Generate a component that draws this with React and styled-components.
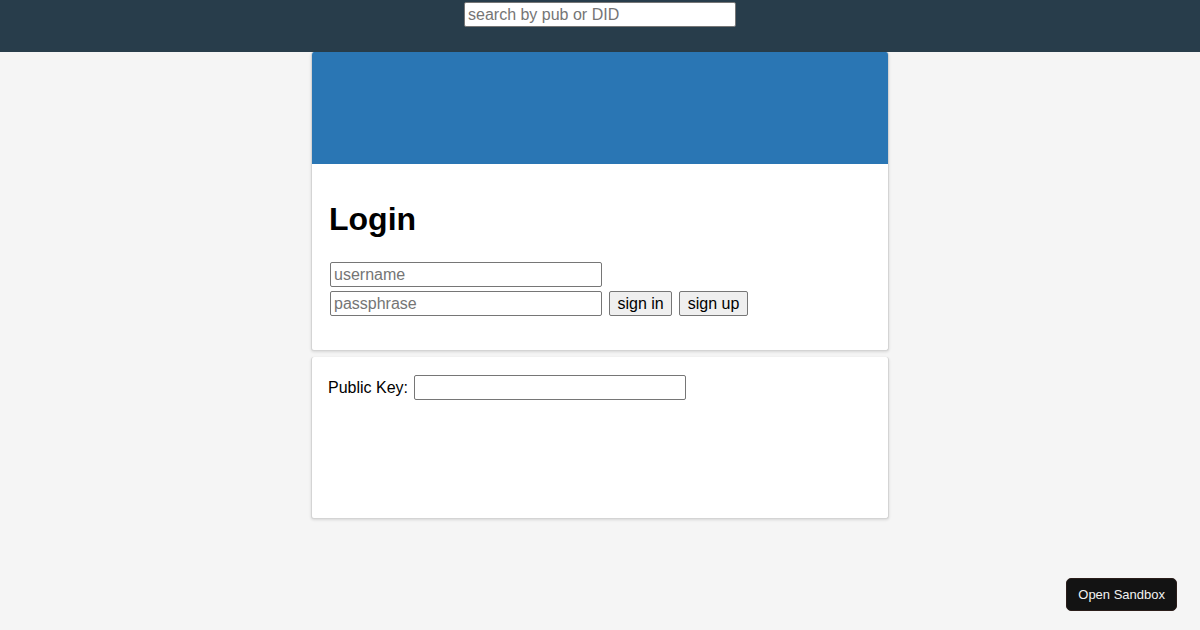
import styled, { createGlobalStyle } from "styled-components";

const GlobalStyle = createGlobalStyle`
  html, body {
    margin: 0;
    padding: 0;
    background-color: #f5f5f5;
    font-family: "Liberation Sans", Arial, sans-serif;
    color: #000;
  }
  #root {
    min-height: 630px;
  }
`;

const Header = styled.header`
  height: 52px;
  background-color: #283d4b;
  display: flex;
  justify-content: center;
  align-items: flex-start;
  padding-top: 2px;
  box-sizing: border-box;
`;

const Field = styled.input`
  box-sizing: border-box;
  width: 272px;
  height: 25px;
  padding: 1px 3px;
  margin: 0;
  border: 1px solid #767676;
  border-radius: 2px;
  background: #fff;
  font-family: "Liberation Sans", Arial, sans-serif;
  font-size: 16px;
  color: #000;

  &::placeholder {
    color: #757575;
  }
`;

const Main = styled.main`
  width: 578px;
  margin: 0 auto;
  display: flex;
  flex-direction: column;
  gap: 6px;
`;

const Card = styled.section`
  background: #fff;
  border: 1px solid #d4d4d4;
  border-top: none;
  border-radius: 3px;
  box-shadow: 0 1px 3px rgba(0, 0, 0, 0.12);
  overflow: hidden;
  box-sizing: border-box;
  height: ${(props) => props.$height}px;
`;

const Banner = styled.div`
  height: 112px;
  background-color: #2a76b4;
`;

const Body = styled.div`
  padding: ${(props) => props.$padding};
`;

const Title = styled.h1`
  margin: 0 0 24px 1px;
  font-size: 32px;
  line-height: 37px;
  font-weight: 700;
`;

const Form = styled.form`
  display: flex;
  flex-direction: column;
  gap: 4px;
  padding-left: 2px;
`;

const Row = styled.div`
  display: flex;
  align-items: center;
  gap: ${(props) => props.$gap || 7}px;
`;

const Button = styled.button`
  box-sizing: border-box;
  height: 25px;
  padding: 1px 7.5px;
  margin: 0;
  border: 1px solid #767676;
  border-radius: 2px;
  background: #efefef;
  font-family: "Liberation Sans", Arial, sans-serif;
  font-size: 16px;
  color: #000;
`;

const Label = styled.label`
  font-size: 16px;
`;

const SandboxButton = styled.button`
  position: fixed;
  right: 23px;
  bottom: 19px;
  height: 33px;
  padding: 0 11px;
  border: 1px solid #2a1d1a;
  border-radius: 5px;
  background: #131313;
  color: #f2f2f2;
  font-family: "Liberation Sans", Arial, sans-serif;
  font-size: 13px;
`;

export default function App() {
  return (
    <>
      <GlobalStyle />
      <Header>
        <Field placeholder="search by pub or DID" />
      </Header>

      <Main>
        <Card $height={299}>
          <Banner />
          <Body $padding="37px 16px 16px">
            <Title>Login</Title>
            <Form onSubmit={(e) => e.preventDefault()}>
              <Field placeholder="username" />
              <Row>
                <Field type="password" placeholder="passphrase" />
                <Row $gap={7}>
                  <Button type="button">sign in</Button>
                  <Button type="button">sign up</Button>
                </Row>
              </Row>
            </Form>
          </Body>
        </Card>

        <Card $height={162}>
          <Body $padding="18px 16px">
            <Row $gap={6}>
              <Label>Public Key:</Label>
              <Field />
            </Row>
          </Body>
        </Card>
      </Main>

      <SandboxButton type="button">Open Sandbox</SandboxButton>
    </>
  );
}
